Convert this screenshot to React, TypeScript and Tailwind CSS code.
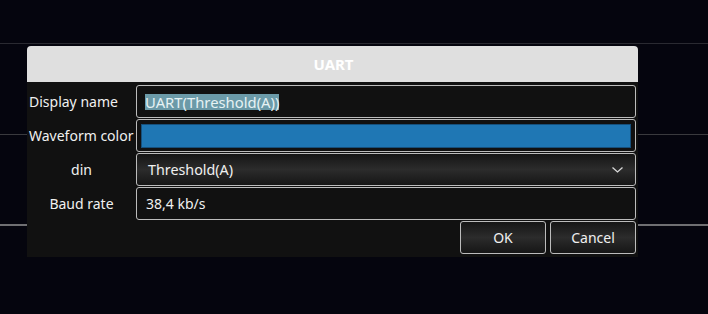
import React from 'react';

const FONT = { fontFamily: '"Noto Sans", "DejaVu Sans", sans-serif' };

const ROWS = [
  { label: 'Display name', kind: 'text', align: 'left' },
  { label: 'Waveform color', kind: 'color', align: 'left' },
  { label: 'din', kind: 'combo', align: 'center' },
  { label: 'Baud rate', kind: 'plain', align: 'center' },
];

function Field({ kind }: { kind: string }) {
  if (kind === 'text') {
    return (
      <div className="flex h-full w-full items-center rounded-[3px] border border-[#bcbcbc] bg-[#111111] pl-[8px]">
        <span className="bg-[#6b9aa8] text-[14.8px] leading-[16px] text-[#e6f2f4]">UART(Threshold(A))</span>
      </div>
    );
  }
  if (kind === 'color') {
    return (
      <div className="flex h-full w-full items-center rounded-[3px] border border-[#bcbcbc] bg-[#111111] px-[4px]">
        <div className="h-[24px] w-full border border-[#16507c] bg-[#1f77b4]" />
      </div>
    );
  }
  if (kind === 'combo') {
    return (
      <div className="flex h-full w-full items-center justify-between rounded-[3px] border border-[#bcbcbc] bg-gradient-to-b from-[#161616] via-[#2c2c2c] to-[#161616] pl-[11px] pr-[12px]">
        <span className="text-[14.3px] text-[#f0f0f0]">Threshold(A)</span>
        <svg width="11" height="6" viewBox="0 0 11 6">
          <polyline points="0.5,0.5 5.5,5 10.5,0.5" fill="none" stroke="#d8d8d8" strokeWidth="1.3" />
        </svg>
      </div>
    );
  }
  return (
    <div className="flex h-full w-full items-center rounded-[3px] border border-[#bcbcbc] bg-[#111111] pl-[9px]">
      <span className="text-[#f0f0f0]">38,4 kb/s</span>
    </div>
  );
}

export default function App() {
  return (
    <div className="relative h-[314px] w-[708px] overflow-hidden bg-[#05050e] text-[14px]" style={FONT}>
      {/* waveform view grid behind the dialog */}
      <div className="absolute left-0 top-[43px] h-px w-full bg-[#2a2a31]" />
      <div className="absolute left-0 top-[134px] h-px w-full bg-[#3a3a3e]" />
      <div className="absolute left-0 top-[224px] h-[2px] w-full bg-[#6f6f72]" />

      <div className="relative ml-[27px] mt-[46px] w-[611px]">
        <div className="flex h-[36px] items-center justify-center rounded-t-[4px] bg-[#dfdfdf] pl-[2px] text-[15px] font-bold text-white">
          UART
        </div>
        <div className="flex flex-col bg-[#111111] pb-[3px] pr-[2px] pt-[3px]">
          <div className="flex flex-col gap-px">
            {ROWS.map((r) => (
              <div key={r.label} className="flex h-[33px] items-center">
                <div
                  className={
                    r.align === 'left'
                      ? 'w-[109px] whitespace-nowrap pl-[2px] text-[#f0f0f0]'
                      : 'w-[109px] whitespace-nowrap text-center text-[#f0f0f0]'
                  }
                >
                  {r.label}
                </div>
                <div className="h-full flex-1">
                  <Field kind={r.kind} />
                </div>
              </div>
            ))}
          </div>
          <div className="mt-px flex justify-end gap-[4px]">
            <button className="h-[33px] w-[86px] rounded-[3px] border border-[#bcbcbc] bg-gradient-to-b from-[#161616] via-[#2c2c2c] to-[#161616] text-[#f0f0f0]">
              OK
            </button>
            <button className="h-[33px] w-[86px] rounded-[3px] border border-[#bcbcbc] bg-gradient-to-b from-[#161616] via-[#2c2c2c] to-[#161616] text-[#f0f0f0]">
              Cancel
            </button>
          </div>
        </div>
      </div>
    </div>
  );
}
